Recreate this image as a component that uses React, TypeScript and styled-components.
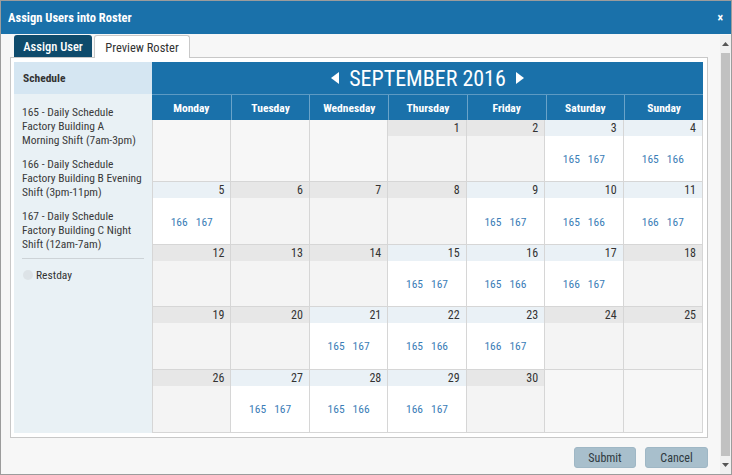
import React from "react";
import styled, { createGlobalStyle } from "styled-components";

const Global = createGlobalStyle`
  html, body { margin: 0; padding: 0; }
  body {
    font-family: "Roboto Condensed", "PT Sans Narrow", "Liberation Sans", Arial, sans-serif;
    color: #333;
  }
  * { box-sizing: border-box; }
`;

const Window = styled.div`
  width: 732px;
  height: 475px;
  border: 1px solid #9c9c9c;
  background: #f7f7f7;
  display: flex;
  flex-direction: column;
  overflow: hidden;
`;

const TitleBar = styled.div`
  height: 33px;
  flex: none;
  background: #1a71aa;
  color: #fff;
  display: flex;
  align-items: center;
  justify-content: space-between;
  padding: 0 8px 0 7px;
  font-size: 12.5px;
  font-weight: bold;
`;

const Close = styled.span`
  font-size: 12px;
  font-weight: bold;
  line-height: 1;
`;

const Body = styled.div`
  flex: 1;
  display: flex;
  min-height: 0;
  margin-top: 1px;
`;

const Main = styled.div`
  flex: 1;
  display: flex;
  flex-direction: column;
  padding: 0 12px 0 9px;
  min-width: 0;
`;

const Tabs = styled.div`
  height: 22px;
  flex: none;
  display: flex;
  gap: 2px;
  padding-left: 4px;
  position: relative;
  z-index: 1;
`;

const Tab = styled.div<{ $active?: boolean; $w: number }>`
  width: ${(p) => p.$w}px;
  height: ${(p) => (p.$active ? 22 : 23)}px;
  display: flex;
  align-items: center;
  justify-content: center;
  font-size: 12.5px;
  font-weight: ${(p) => (p.$active ? 500 : 400)};
  border-radius: 3px 3px 0 0;
  background: ${(p) => (p.$active ? "#0e4b6c" : "#fff")};
  color: ${(p) => (p.$active ? "#fff" : "#333")};
  border: ${(p) => (p.$active ? "none" : "1px solid #c9c9c9")};
  border-bottom: none;
`;

const Panel = styled.div`
  flex: 1;
  min-height: 0;
  background: #fff;
  border: 1px solid #c8c8c8;
  padding: 4px 4px 4px 3px;
  display: flex;
`;

const Sidebar = styled.div`
  width: 138px;
  flex: none;
  background: #e9f1f5;
  display: flex;
  flex-direction: column;
`;

const SideHeader = styled.div`
  height: 32px;
  flex: none;
  background: #d5e6f2;
  display: flex;
  align-items: center;
  padding-left: 9px;
  font-size: 11.5px;
  font-weight: bold;
`;

const SideList = styled.div`
  padding: 11px 8px 0 8px;
  display: flex;
  flex-direction: column;
  gap: 10px;
`;

const SideItem = styled.div`
  font-size: 11.5px;
  line-height: 14px;
  color: #3a3a3a;
  white-space: nowrap;
`;

const Divider = styled.div`
  height: 1px;
  background: #cdd3d7;
  margin: 7px 8px 0 8px;
`;

const Restday = styled.div`
  display: flex;
  align-items: center;
  gap: 3px;
  margin: 9px 0 0 9px;
  font-size: 11.5px;
  line-height: 14px;
`;

const Dot = styled.span`
  width: 10px;
  height: 10px;
  border-radius: 50%;
  background: #dde3e7;
`;

const Calendar = styled.div`
  flex: 1;
  min-width: 0;
  display: flex;
  flex-direction: column;
`;

const MonthBar = styled.div`
  height: 32px;
  flex: none;
  background: #1a71aa;
  color: #fff;
  display: flex;
  align-items: center;
  justify-content: center;
  gap: 10px;
  font-size: 22px;
`;

const Arrow = styled.svg`
  width: 8px;
  height: 12px;
  fill: #fff;
`;

const DayNames = styled.div`
  height: 26px;
  flex: none;
  display: grid;
  grid-template-columns: repeat(7, 1fr);
  background: #1a71aa;
  border-top: 1px solid #5d9ac3;
`;

const DayName = styled.div`
  display: flex;
  align-items: center;
  justify-content: center;
  color: #fff;
  font-weight: bold;
  font-size: 11.5px;
  border-left: 1px solid #6aa3c9;
  &:first-child { border-left: none; }
`;

const Grid = styled.div`
  flex: 1;
  min-height: 0;
  display: grid;
  grid-template-columns: repeat(7, 1fr);
  grid-template-rows: repeat(5, 1fr);
  border-left: 1px solid #d6d6d6;
  border-right: 1px solid #d6d6d6;
  border-bottom: 1px solid #d6d6d6;
`;

type Kind = "empty" | "plain" | "assigned";

const Cell = styled.div<{ $kind: Kind }>`
  display: flex;
  flex-direction: column;
  border-right: 1px solid #d6d6d6;
  border-bottom: 1px solid #d6d6d6;
  background: ${(p) =>
    p.$kind === "assigned" ? "#fff" : p.$kind === "plain" ? "#f4f4f4" : "#f7f7f7"};
  &:nth-child(7n) { border-right: none; }
  &:nth-last-child(-n + 7) { border-bottom: none; }
`;

const DateStrip = styled.div<{ $kind: Kind }>`
  height: 16px;
  flex: none;
  background: ${(p) => (p.$kind === "assigned" ? "#eaf1f6" : "#e7e7e7")};
  display: flex;
  align-items: center;
  justify-content: flex-end;
  padding-right: 6px;
  font-size: 12px;
  color: #333;
`;

const Codes = styled.div`
  flex: 1;
  display: flex;
  align-items: center;
  justify-content: center;
  gap: 8px;
  font-size: 11.5px;
  color: #3b7db7;
  padding-top: 1px;
`;

const Footer = styled.div`
  height: 36px;
  flex: none;
  display: flex;
  justify-content: flex-end;
  align-items: flex-start;
  padding-top: 9px;
  gap: 9px;
`;

const Button = styled.button<{ $w: number }>`
  width: ${(p) => p.$w}px;
  height: 21px;
  border: 1px solid #9fb7c5;
  border-radius: 3px;
  background: #a8bfcc;
  color: #2f3a40;
  font-family: inherit;
  font-size: 12px;
  padding: 0;
`;

const Scrollbar = styled.div`
  width: 11px;
  flex: none;
  background: #f0f0f0;
  display: flex;
  flex-direction: column;
  align-items: center;
`;

const ScrollArrow = styled.div`
  height: 18px;
  flex: none;
  display: flex;
  align-items: center;
  justify-content: center;
  svg { width: 7px; height: 4px; fill: #555; }
`;

const Thumb = styled.div`
  flex: 1;
  width: 9px;
  background: #c1c1c1;
`;

const A = ["165", "167"];
const B = ["165", "166"];
const C = ["166", "167"];

type Day = { d: number; codes?: string[] } | null;

const weeks: Day[][] = [
  [null, null, null, { d: 1 }, { d: 2 }, { d: 3, codes: A }, { d: 4, codes: B }],
  [{ d: 5, codes: C }, { d: 6 }, { d: 7 }, { d: 8 }, { d: 9, codes: A }, { d: 10, codes: B }, { d: 11, codes: C }],
  [{ d: 12 }, { d: 13 }, { d: 14 }, { d: 15, codes: A }, { d: 16, codes: B }, { d: 17, codes: C }, { d: 18 }],
  [{ d: 19 }, { d: 20 }, { d: 21, codes: A }, { d: 22, codes: B }, { d: 23, codes: C }, { d: 24 }, { d: 25 }],
  [{ d: 26 }, { d: 27, codes: A }, { d: 28, codes: B }, { d: 29, codes: C }, { d: 30 }, null, null],
];

const dayNames = ["Monday", "Tuesday", "Wednesday", "Thursday", "Friday", "Saturday", "Sunday"];

export default function App() {
  return (
    <>
      <Global />
      <Window>
        <TitleBar>
          <span>Assign Users into Roster</span>
          <Close>×</Close>
        </TitleBar>
        <Body>
          <Main>
            <Tabs>
              <Tab $active $w={78}>Assign User</Tab>
              <Tab $w={96}>Preview Roster</Tab>
            </Tabs>
            <Panel>
              <Sidebar>
                <SideHeader>Schedule</SideHeader>
                <SideList>
                  <SideItem>
                    165 - Daily Schedule
                    <br />
                    Factory Building A
                    <br />
                    Morning Shift (7am-3pm)
                  </SideItem>
                  <SideItem>
                    166 - Daily Schedule
                    <br />
                    Factory Building B Evening
                    <br />
                    Shift (3pm-11pm)
                  </SideItem>
                  <SideItem>
                    167 - Daily Schedule
                    <br />
                    Factory Building C Night
                    <br />
                    Shift (12am-7am)
                  </SideItem>
                </SideList>
                <Divider />
                <Restday>
                  <Dot />
                  Restday
                </Restday>
              </Sidebar>
              <Calendar>
                <MonthBar>
                  <Arrow viewBox="0 0 8 12">
                    <path d="M8 0 L0 6 L8 12 Z" />
                  </Arrow>
                  <span>SEPTEMBER 2016</span>
                  <Arrow viewBox="0 0 8 12">
                    <path d="M0 0 L8 6 L0 12 Z" />
                  </Arrow>
                </MonthBar>
                <DayNames>
                  {dayNames.map((n) => (
                    <DayName key={n}>{n}</DayName>
                  ))}
                </DayNames>
                <Grid>
                  {weeks.flat().map((c, i) => {
                    const kind: Kind = !c ? "empty" : c.codes ? "assigned" : "plain";
                    return (
                      <Cell key={i} $kind={kind}>
                        {c && <DateStrip $kind={kind}>{c.d}</DateStrip>}
                        {c?.codes && (
                          <Codes>
                            {c.codes.map((code) => (
                              <span key={code}>{code}</span>
                            ))}
                          </Codes>
                        )}
                      </Cell>
                    );
                  })}
                </Grid>
              </Calendar>
            </Panel>
            <Footer>
              <Button $w={62}>Submit</Button>
              <Button $w={63}>Cancel</Button>
            </Footer>
          </Main>
          <Scrollbar>
            <ScrollArrow>
              <svg viewBox="0 0 7 4">
                <path d="M0 4 L3.5 0 L7 4 Z" />
              </svg>
            </ScrollArrow>
            <Thumb />
            <ScrollArrow>
              <svg viewBox="0 0 7 4">
                <path d="M0 0 L3.5 4 L7 0 Z" />
              </svg>
            </ScrollArrow>
          </Scrollbar>
        </Body>
      </Window>
    </>
  );
}
